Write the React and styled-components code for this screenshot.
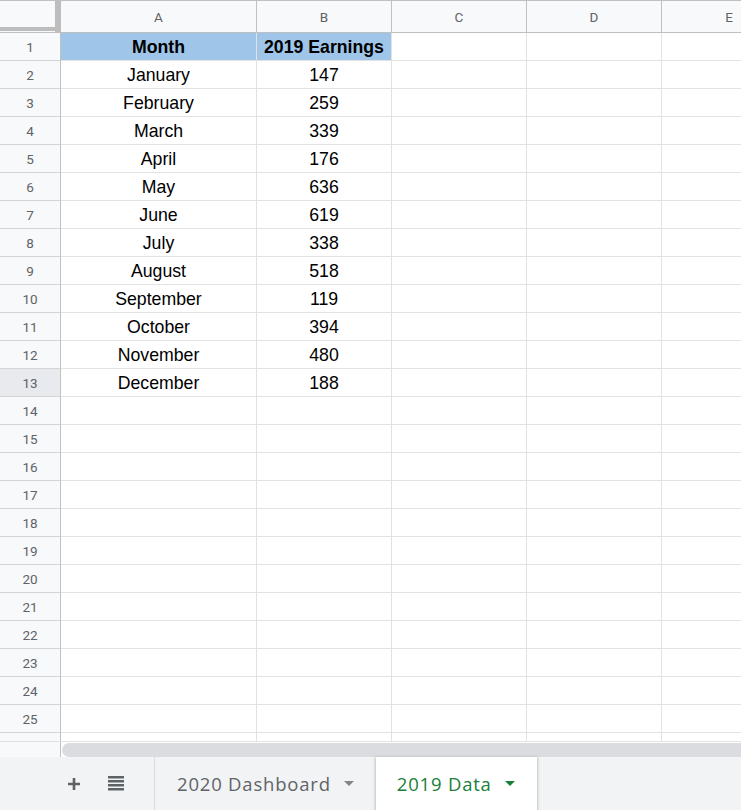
import React from "react";
import styled, { createGlobalStyle, css } from "styled-components";

const GlobalStyle = createGlobalStyle`
  html, body {
    margin: 0;
    padding: 0;
    background: #ffffff;
    overflow: hidden;
    font-family: "Liberation Sans", Arial, sans-serif;
  }
  * { box-sizing: border-box; }
`;

const Page = styled.div`
  width: 741px;
  height: 810px;
  display: flex;
  flex-direction: column;
  overflow: hidden;
`;

const Sheet = styled.div`
  flex: none;
  height: 741px;
  overflow: hidden;
  border-top: 1px solid #c0c0c0;
`;

const Grid = styled.div`
  display: grid;
  grid-template-columns: 61px 196px repeat(4, 135px);
  grid-template-rows: 32px;
  grid-auto-rows: 28px;
  width: 797px;
`;

const Corner = styled.div`
  background: #f8f9fa;
  border-right: 6px solid #bdbdbd;
  border-bottom: 1px solid #c0c0c0;
`;

const FreezeBar = styled.div`
  height: 30px;
  border-bottom: 4px solid #bdbdbd;
`;

const ColHead = styled.div`
  display: flex;
  align-items: center;
  justify-content: center;
  background: #f8f9fa;
  border-right: 1px solid #c0c0c0;
  border-bottom: 1px solid #c0c0c0;
  color: #5f6368;
  font-family: Roboto, "Liberation Sans", sans-serif;
  font-size: 13.5px;
`;

const RowHead = styled.div`
  display: flex;
  align-items: center;
  justify-content: center;
  background: ${(p) => (p.$selected ? "#e8eaed" : "#f8f9fa")};
  border-right: 1px solid #c0c0c0;
  border-bottom: 1px solid #d4d4d4;
  color: #5f6368;
  font-family: Roboto, "Liberation Sans", sans-serif;
  font-size: 13.5px;
`;

const Cell = styled.div`
  display: flex;
  align-items: center;
  justify-content: center;
  padding-top: 2px;
  border-right: 1px solid #e2e2e2;
  border-bottom: 1px solid #e2e2e2;
  color: #000000;
  font-family: "Liberation Sans", Arial, sans-serif;
  font-size: 17.7px;
  white-space: nowrap;
  ${(p) =>
    p.$head &&
    css`
      background: #9fc5e8;
      font-weight: bold;
    `}
`;

const ScrollStrip = styled.div`
  flex: none;
  height: 16px;
  display: flex;
  border-top: 1px solid #e2e2e2;
`;

const StripCorner = styled.div`
  width: 61px;
  background: #f8f9fa;
  border-right: 1px solid #c0c0c0;
`;

const Track = styled.div`
  flex: 1;
  padding: 1px 0 0 1px;
`;

const Thumb = styled.div`
  height: 14px;
  background: #dadce0;
  border-radius: 7px 0 0 7px;
`;

const TabBar = styled.div`
  flex: none;
  height: 53px;
  display: flex;
  align-items: stretch;
  background: #f1f3f4;
`;

const Tools = styled.div`
  width: 155px;
  display: flex;
  align-items: center;
  gap: 18px;
  padding-left: 62px;
  border-right: 1px solid #dadce0;
`;

const IconButton = styled.div`
  width: 24px;
  height: 24px;
  display: flex;
  align-items: center;
  justify-content: center;
  color: #5f6368;
`;

const Tab = styled.div`
  display: flex;
  align-items: center;
  gap: 13px;
  white-space: nowrap;
  padding: 0 22px 1px ${(p) => (p.$active ? "21px" : "22px")};
  font-family: "Open Sans", Roboto, sans-serif;
  font-size: 18.5px;
  letter-spacing: 0.8px;
  color: ${(p) => (p.$active ? "#188038" : "#5f6368")};
  background: ${(p) => (p.$active ? "#ffffff" : "transparent")};
  box-shadow: ${(p) =>
    p.$active
      ? "0 1px 3px 1px rgba(60,64,67,0.15), 0 1px 2px rgba(60,64,67,0.3)"
      : "none"};
`;

const Caret = styled.span`
  flex: none;
  width: 0;
  height: 0;
  border-left: 5px solid transparent;
  border-right: 5px solid transparent;
  border-top: 5px solid ${(p) => (p.$active ? "#188038" : "#80868b")};
  margin-top: 1px;
`;

const months = [
  ["January", 147],
  ["February", 259],
  ["March", 339],
  ["April", 176],
  ["May", 636],
  ["June", 619],
  ["July", 338],
  ["August", 518],
  ["September", 119],
  ["October", 394],
  ["November", 480],
  ["December", 188],
];

const cols = ["A", "B", "C", "D", "E"];

function PlusIcon() {
  return (
    <svg width="14" height="14" viewBox="0 0 14 14">
      <path d="M7 1v12M1 7h12" stroke="currentColor" strokeWidth="2.6" />
    </svg>
  );
}

function ListIcon() {
  return (
    <svg width="16" height="15" viewBox="0 0 16 15">
      <rect x="0" y="0" width="16" height="2.5" fill="currentColor" />
      <rect x="0" y="4" width="16" height="2.5" fill="currentColor" />
      <rect x="0" y="8" width="16" height="2.5" fill="currentColor" />
      <rect x="0" y="12" width="16" height="2.5" fill="currentColor" />
    </svg>
  );
}

export default function App() {
  const rows = [];
  for (let r = 1; r <= 26; r++) {
    let a = "";
    let b = "";
    if (r === 1) {
      a = "Month";
      b = "2019 Earnings";
    } else if (r <= 13) {
      a = months[r - 2][0];
      b = months[r - 2][1];
    }
    rows.push(
      <React.Fragment key={r}>
        <RowHead $selected={r === 13}>{r}</RowHead>
        <Cell $head={r === 1}>{a}</Cell>
        <Cell $head={r === 1}>{b}</Cell>
        <Cell />
        <Cell />
        <Cell />
      </React.Fragment>
    );
  }

  return (
    <>
      <GlobalStyle />
      <Page>
        <Sheet>
          <Grid>
            <Corner>
              <FreezeBar />
            </Corner>
            {cols.map((c) => (
              <ColHead key={c}>{c}</ColHead>
            ))}
            {rows}
          </Grid>
        </Sheet>
        <ScrollStrip>
          <StripCorner />
          <Track>
            <Thumb />
          </Track>
        </ScrollStrip>
        <TabBar>
          <Tools>
            <IconButton>
              <PlusIcon />
            </IconButton>
            <IconButton>
              <ListIcon />
            </IconButton>
          </Tools>
          <Tab>
            2020 Dashboard
            <Caret />
          </Tab>
          <Tab $active>
            2019 Data
            <Caret $active />
          </Tab>
        </TabBar>
      </Page>
    </>
  );
}
